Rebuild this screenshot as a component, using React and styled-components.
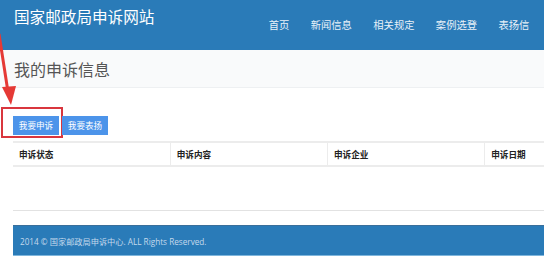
import React from "react";
import styled, { createGlobalStyle } from "styled-components";

const Global = createGlobalStyle`
  html, body { margin: 0; padding: 0; overflow: hidden; background: #fff; }
  body { font-family: "Open Sans", "Noto Sans CJK SC", sans-serif; width: 544px; height: 270px; }
  * { box-sizing: border-box; }
`;

const Page = styled.div`
  position: relative;
  width: 544px;
  height: 270px;
  overflow: hidden;
`;

const Header = styled.header`
  height: 50px;
  background: #2a7bb8;
  display: flex;
  justify-content: space-between;
  align-items: center;
  padding: 0 0 0 14px;
`;

const Brand = styled.div`
  align-self: flex-start;
  padding-top: 6px;
  font-family: "Noto Sans CJK SC", sans-serif;
  font-size: 15.6px;
  line-height: 20px;
  color: #fff;
`;

const Nav = styled.nav`
  display: flex;
  padding-right: 4px;
`;

const NavItem = styled.a`
  font-family: "Noto Sans CJK SC", sans-serif;
  font-size: 10.3px;
  line-height: 14px;
  color: #e8f1f8;
  padding: 0 10.7px;
`;

const TitleBand = styled.div`
  height: 38px;
  background: #f9fafb;
  border-bottom: 1px solid #eef0f2;
  display: flex;
  align-items: center;
  padding-left: 14px;
`;

const PageTitle = styled.h1`
  margin: 0;
  font-family: "Noto Sans CJK SC", sans-serif;
  font-weight: 400;
  font-size: 16px;
  line-height: 20px;
  color: #555;
`;

const Content = styled.div`
  width: 642px;
  padding-left: 13px;
`;

const ButtonRow = styled.div`
  display: flex;
  gap: 3px;
  margin-top: 28px;
`;

const ButtonWrap = styled.div`
  position: relative;
  display: flex;
`;

const Button = styled.button`
  width: ${(p) => p.$w}px;
  height: 19px;
  border: 0;
  padding: 0;
  background: #4c94ea;
  color: #fff;
  font-family: "Noto Sans CJK SC", sans-serif;
  font-size: 8.6px;
  line-height: 19px;
  cursor: pointer;
`;

const Highlight = styled.span`
  position: absolute;
  left: -12px;
  top: -9px;
  right: -4px;
  bottom: -3px;
  border: 2px solid #d9363e;
  pointer-events: none;
`;

const Table = styled.table`
  margin-top: 6px;
  width: 629px;
  border-collapse: collapse;
  table-layout: fixed;
`;

const Th = styled.th`
  height: 24px;
  padding: 0 6px;
  text-align: left;
  font-family: "Noto Sans CJK SC", sans-serif;
  font-weight: 700;
  font-size: 8.6px;
  color: #222;
  border-top: 2px solid #ececec;
  border-bottom: 2px solid #ececec;
  border-left: 1px solid #ececec;
  &:first-child { border-left: 0; }
`;

const Divider = styled.hr`
  margin: 43px 0 0;
  border: 0;
  border-top: 1px solid #e2e2e2;
  width: 629px;
`;

const Footer = styled.footer`
  margin-top: 14px;
  width: 629px;
  height: 31px;
  background: #2a7bb8;
  border-top: 1px solid #3a6f9a;
  border-bottom: 1px solid #7fb6dc;
  display: flex;
  align-items: center;
  padding-left: 7px;
  font-family: "Open Sans", "Noto Sans CJK SC", sans-serif;
  font-size: 8.2px;
  color: #c4d9ec;
`;

const Arrow = styled.svg`
  position: absolute;
  left: 0;
  top: 0;
  pointer-events: none;
`;

const navItems = ["首页", "新闻信息", "相关规定", "案例选登", "表扬信"];
const columns = ["申诉状态", "申诉内容", "申诉企业", "申诉日期"];

export default function App() {
  return (
    <Page>
      <Global />
      <Header>
        <Brand>国家邮政局申诉网站</Brand>
        <Nav>
          {navItems.map((n) => (
            <NavItem key={n}>{n}</NavItem>
          ))}
        </Nav>
      </Header>
      <TitleBand>
        <PageTitle>我的申诉信息</PageTitle>
      </TitleBand>
      <Content>
        <ButtonRow>
          <ButtonWrap>
            <Button $w={46}>我要申诉</Button>
            <Highlight />
          </ButtonWrap>
          <ButtonWrap>
            <Button $w={46}>我要表扬</Button>
          </ButtonWrap>
        </ButtonRow>
        <Table>
          <thead>
            <tr>
              {columns.map((c) => (
                <Th key={c}>{c}</Th>
              ))}
            </tr>
          </thead>
        </Table>
        <Divider />
        <Footer>2014 © 国家邮政局申诉中心. ALL Rights Reserved.</Footer>
      </Content>
      <Arrow width="30" height="110" viewBox="0 0 30 110">
        <line x1="-1" y1="34" x2="8" y2="92" stroke="#e53935" strokeWidth="3" />
        <polygon points="11,105 2,87 16,86" fill="#e53935" />
      </Arrow>
    </Page>
  );
}
